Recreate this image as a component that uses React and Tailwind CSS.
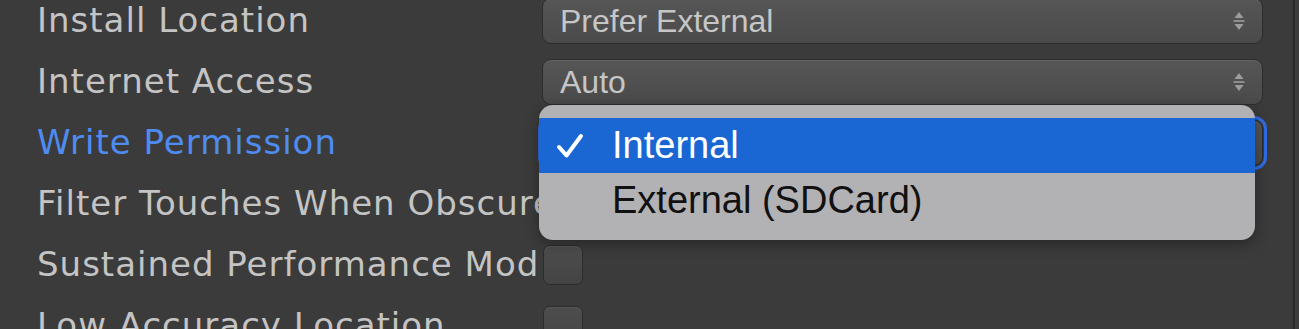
const rows = [
  { label: 'Install Location', kind: 'select', value: 'Prefer External' },
  { label: 'Internet Access', kind: 'select', value: 'Auto' },
  { label: 'Write Permission', kind: 'select', value: '', focused: true },
  { label: 'Filter Touches When Obscured', kind: 'checkbox' },
  { label: 'Sustained Performance Mode', kind: 'checkbox' },
  { label: 'Low Accuracy Location', kind: 'checkbox' },
]

const options = [
  { label: 'Internal', selected: true },
  { label: 'External (SDCard)' },
]

function Arrows() {
  return (
    <svg width="12" height="24" viewBox="0 0 12 24" className="shrink-0">
      <path d="M6 3 L10.5 9 L1.5 9 Z" fill="#9c9c9c" />
      <rect x="0.5" y="11.2" width="11" height="1.6" fill="#9c9c9c" />
      <path d="M6 21 L10.5 15 L1.5 15 Z" fill="#9c9c9c" />
    </svg>
  )
}

function Select({ value, focused }) {
  return (
    <div
      className={`ml-[2px] w-[721px] h-[46px] flex items-center justify-between pl-[17px] pr-[17px] rounded-[9px] border border-[#2c2c2c] bg-gradient-to-b from-[#565656] to-[#4a4a4a] shadow-[inset_0_1px_0_#646464] ${
        focused ? 'outline-[3px] outline-solid outline-[#2f6ce5] outline-offset-[1px]' : ''
      }`}
    >
      <span className="text-[32px] leading-normal text-[#c6c6c6] whitespace-nowrap [font-family:'Liberation_Sans',Arial,sans-serif]">
        {value}
      </span>
      <Arrows />
    </div>
  )
}

function Checkbox() {
  return (
    <div className="ml-[3px] w-[40px] h-[40px] rounded-[7px] border border-[#2c2c2c] bg-gradient-to-b from-[#4d4d4d] to-[#444444] shadow-[inset_0_1px_0_#585858]" />
  )
}

export default function App() {
  return (
    <div className="w-[1299px] h-[329px] overflow-hidden bg-[#3b3b3b] flex [font-family:'DejaVu_Sans',sans-serif]">
      <div className="relative w-[1293px] shrink-0">
        <div className="flex flex-col -mt-[10px]">
          {rows.map((r, i) => (
            <div key={i} className="h-[61px] flex items-center shrink-0">
              <div className="w-[540px] shrink-0 overflow-hidden whitespace-nowrap pl-[37px]">
                <span
                  className={`text-[34px] leading-normal tracking-[1px] ${
                    r.focused ? 'text-[#4e8cf2]' : 'text-[#c4c4c4]'
                  }`}
                >
                  {r.label}
                </span>
              </div>
              {r.kind === 'select' ? <Select value={r.value} focused={r.focused} /> : <Checkbox />}
            </div>
          ))}
        </div>

        {/* open dropdown menu */}
        <div className="absolute left-[539px] top-[105px] w-[716px] h-[135px] rounded-[14px] bg-[#b2b2b5] pt-[13px] shadow-[0_4px_14px_rgba(0,0,0,0.35)] overflow-hidden [font-family:'Liberation_Sans',Arial,sans-serif]">
          {options.map((o, i) => (
            <div
              key={i}
              className={`h-[55px] flex items-center ${o.selected ? 'bg-[#1a66d3] text-white' : 'text-[#111111]'}`}
            >
              <div className="w-[73px] shrink-0 pl-[17px]">
                {o.selected && (
                  <svg width="28" height="26" viewBox="0 0 28 26">
                    <path d="M3 14 L10.5 22.5 L25 3" fill="none" stroke="white" strokeWidth="4" strokeLinecap="round" strokeLinejoin="round" />
                  </svg>
                )}
              </div>
              <span className="text-[38px] leading-normal whitespace-nowrap">{o.label}</span>
            </div>
          ))}
        </div>
      </div>
      <div className="w-[2px] shrink-0 bg-[#2a2a2a]" />
      <div className="flex-1 bg-[#3d3d3d]" />
    </div>
  )
}
